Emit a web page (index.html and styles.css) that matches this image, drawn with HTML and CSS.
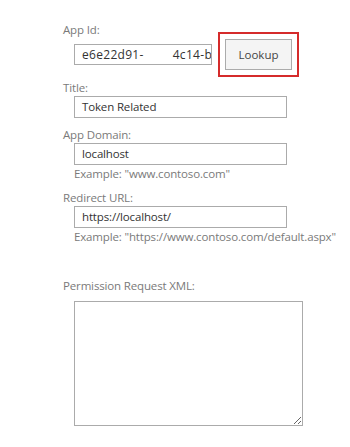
FILE: index.html
```html
<!DOCTYPE html>
<html>
<head>
<meta charset="utf-8">
<link rel="stylesheet" href="styles.css">
</head>
<body>
<form class="form">
  <div class="field field-appid">
    <label class="label">App Id:</label>
    <div class="row">
      <div class="input input-short"><span>e6e22d91-</span><span class="redacted"></span><span>4c14-b7</span></div>
      <button type="button" class="btn">Lookup</button>
    </div>
  </div>
  <div class="field field-title">
    <label class="label">Title:</label>
    <div class="input">Token Related</div>
  </div>
  <div class="field field-domain">
    <label class="label">App Domain:</label>
    <div class="input">localhost</div>
    <div class="hint">Example: "www.contoso.com"</div>
  </div>
  <div class="field field-redirect">
    <label class="label">Redirect URL:</label>
    <div class="input">https://localhost/</div>
    <div class="hint">Example: "https://www.contoso.com/default.aspx"</div>
  </div>
  <div class="field field-xml">
    <label class="label">Permission Request XML:</label>
    <textarea class="textarea"></textarea>
  </div>
</form>
</body>
</html>
```
FILE: styles.css
```css
html, body {
  margin: 0;
  padding: 0;
  background: #ffffff;
}
body {
  font-family: "Open Sans", "Noto Sans", "Liberation Sans", sans-serif;
  font-size: 11.5px;
  letter-spacing: -0.15px;
  color: #444;
}
.form {
  padding: 22px 0 0 63px;
  margin: 0;
}
.label {
  display: block;
  line-height: 16px;
  color: #7a7a7a;
  white-space: nowrap;
}
.row {
  display: flex;
  align-items: center;
  gap: 13px;
  margin-top: 1px;
}
.input {
  box-sizing: border-box;
  width: 213px;
  height: 22px;
  margin-left: 11px;
  border: 1px solid #ababab;
  padding: 0 7px;
  line-height: 20px;
  font-size: 11.5px;
  color: #333;
  white-space: nowrap;
  overflow: hidden;
  background: #fff;
}
.input-short {
  width: 138px;
  height: 21px;
  line-height: 19px;
  font-size: 12px;
  letter-spacing: 0.3px;
}
.redacted {
  display: inline-block;
  width: 29px;
}
.btn {
  box-sizing: border-box;
  width: 67px;
  height: 31px;
  padding: 0;
  border: 1px solid #ababab;
  background: #f4f4f4;
  color: #444;
  font: inherit;
  font-size: 11.5px;
  outline: 2px solid #d52b2b;
  outline-offset: 5px;
}
.field-title { margin-top: 10px; }
.field-domain { margin-top: 9px; }
.field-redirect { margin-top: 8px; }
.field-xml { margin-top: 33px; }
.hint {
  margin-left: 11px;
  margin-top: 1px;
  line-height: 16px;
  color: #7a7a7a;
  white-space: nowrap;
}
.textarea {
  display: block;
  box-sizing: border-box;
  width: 229px;
  height: 125px;
  margin: 7px 0 0 11px;
  border: 1px solid #ababab;
  padding: 2px;
  resize: both;
  font: inherit;
}
```
